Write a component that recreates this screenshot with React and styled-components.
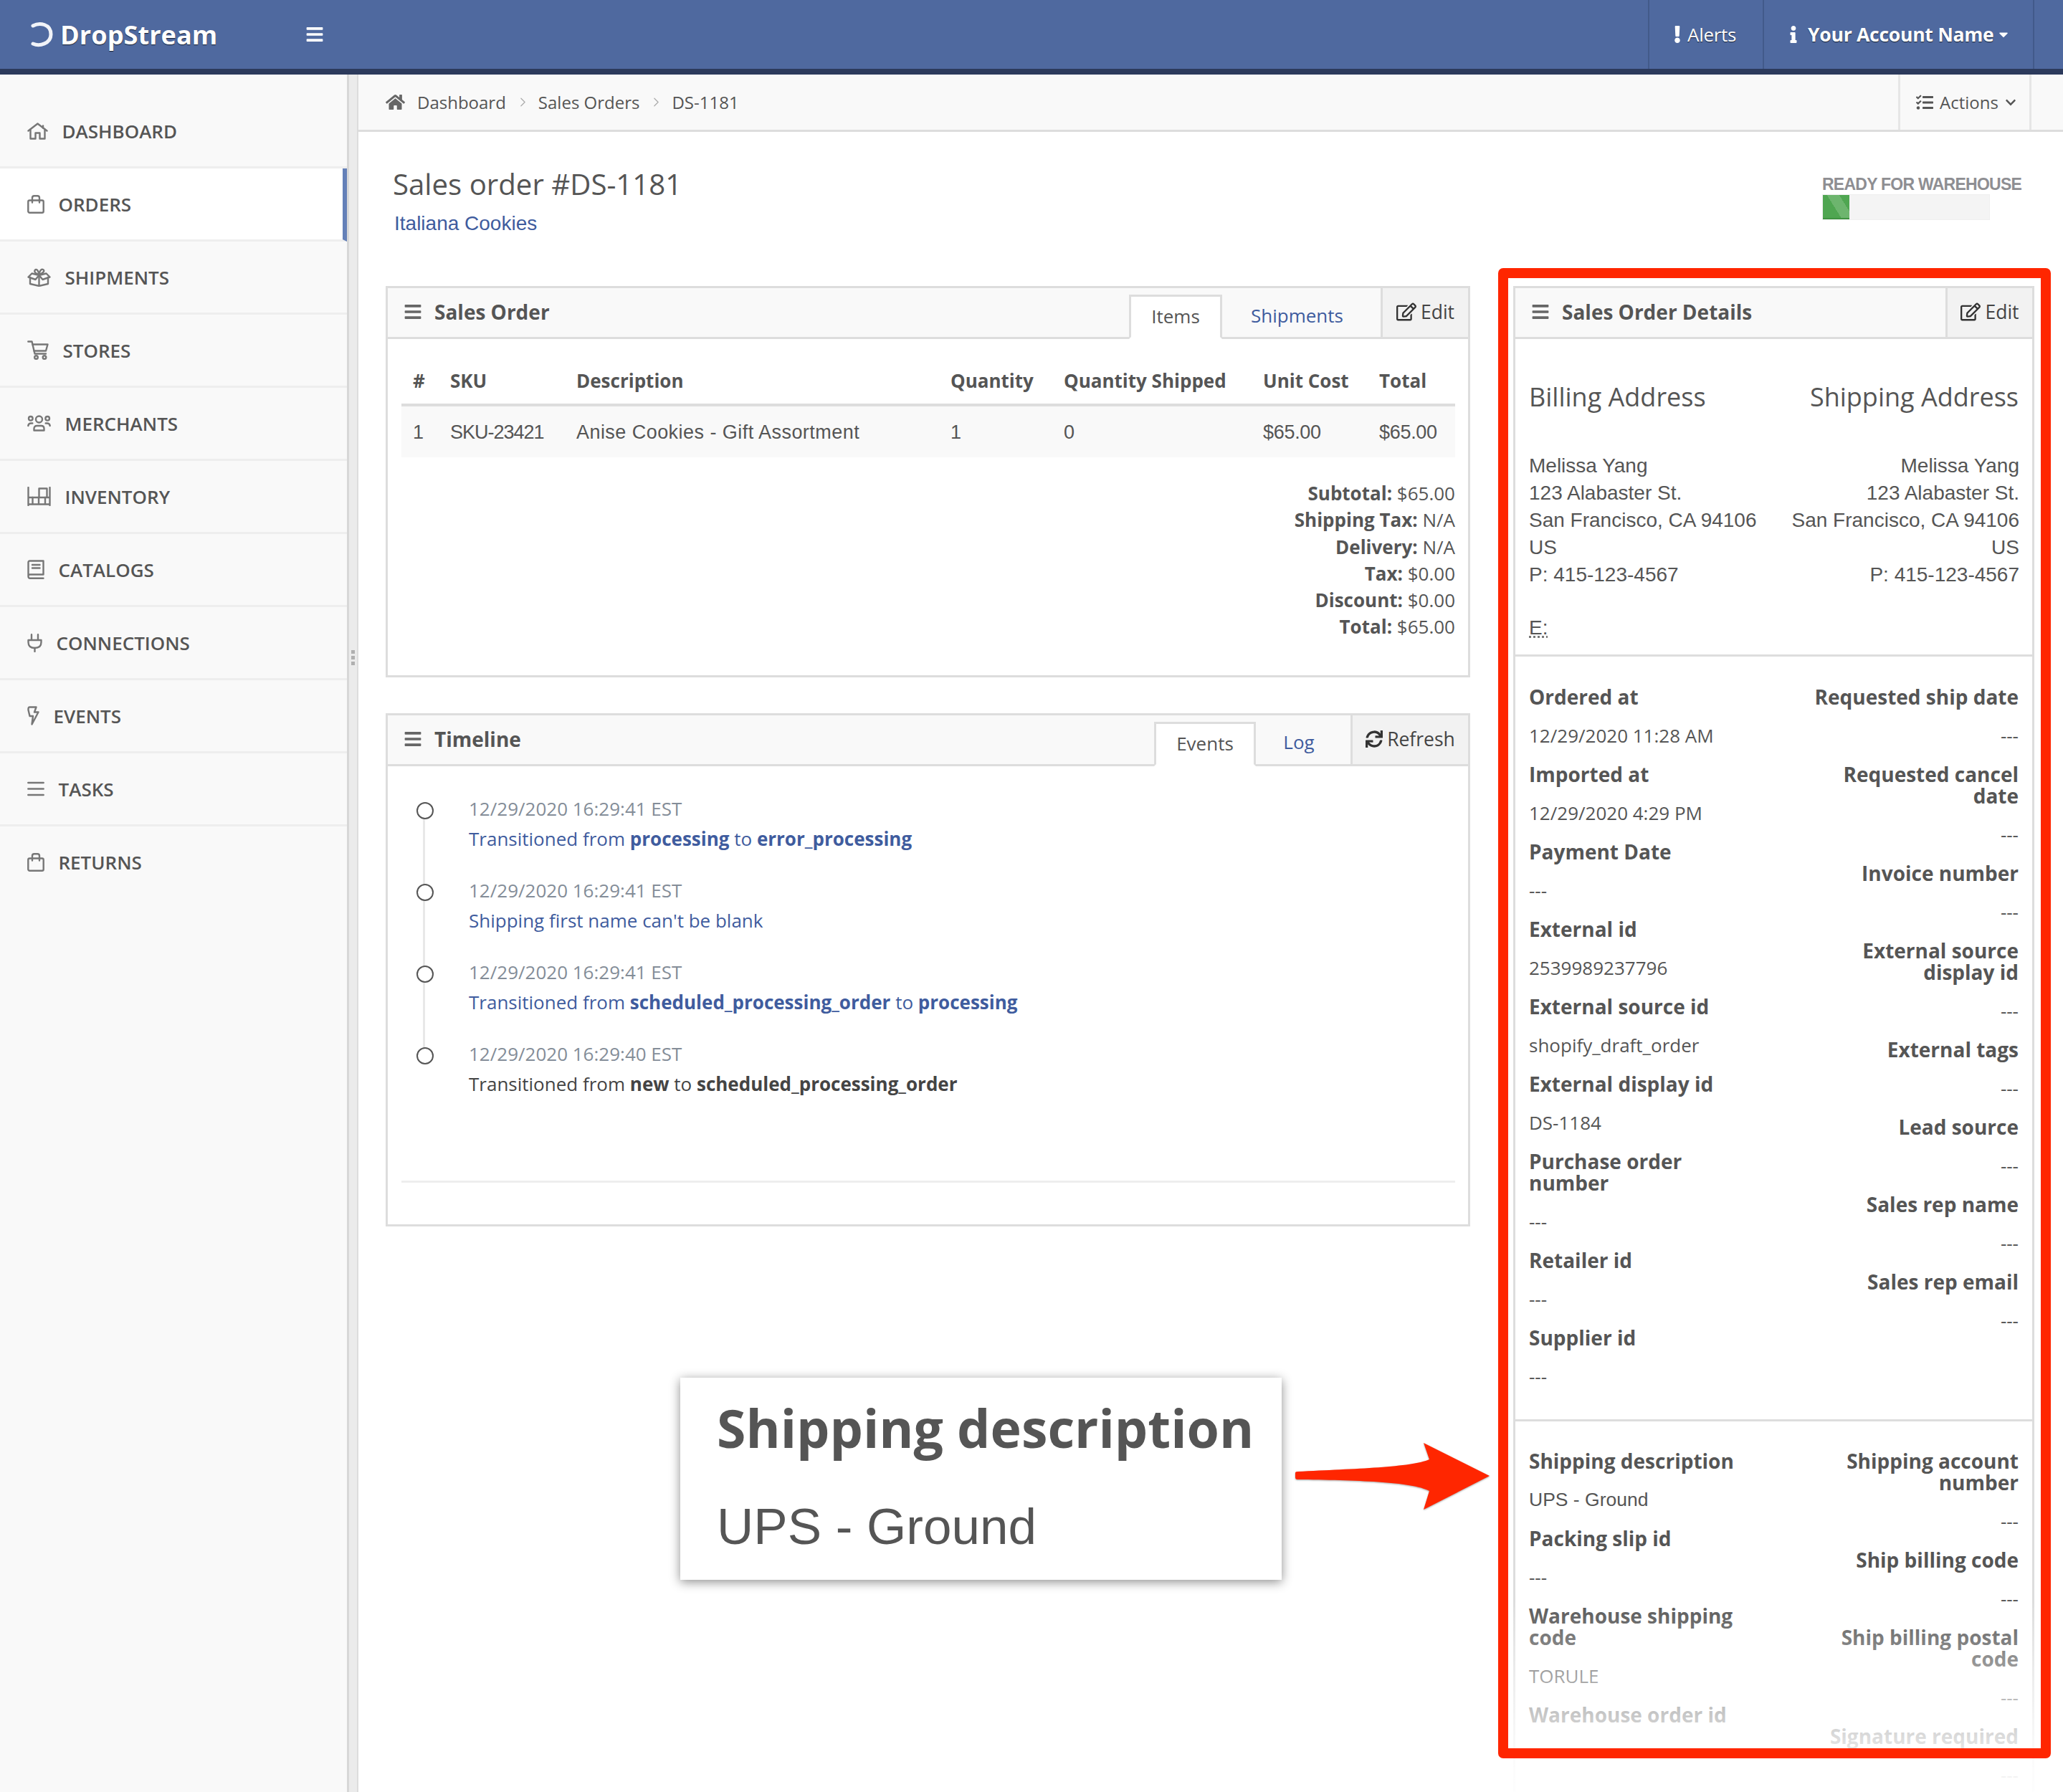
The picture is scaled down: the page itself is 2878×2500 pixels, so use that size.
import React from 'react';
import styled, { createGlobalStyle } from 'styled-components';
import {
  FaHome,
  FaBars,
  FaTasks,
  FaRegEdit,
  FaSync,
  FaChevronDown,
  FaExclamation,
  FaInfo,
  FaCaretDown,
} from 'react-icons/fa';
import { ChevronRight } from 'lucide-react';

const SANS = '"Open Sans", "Liberation Sans", sans-serif';
const ARIAL = '"Liberation Sans", Arial, sans-serif';

const GlobalStyle = createGlobalStyle`
  html, body {
    margin: 0;
    padding: 0;
    background: #fff;
  }
  * {
    box-sizing: border-box;
  }
`;

const Page = styled.div`
  position: relative;
  width: 2878px;
  height: 2500px;
  overflow: hidden;
  font-family: ${SANS};
  color: #555;
`;

const TopBar = styled.header`
  display: flex;
  align-items: stretch;
  height: 104px;
  padding-right: 40px;
  background: #4f699f;
  border-bottom: 8px solid #2c3a5c;
  color: #fff;
  text-shadow: 0 1px 1px rgba(0, 0, 0, 0.7);
`;

const Brand = styled.div`
  display: flex;
  align-items: center;
  gap: 10px;
  width: 426px;
  padding-left: 43px;
  font-size: 36.2px;
  font-weight: 700;
`;

const BrandMark = styled.svg`
  filter: blur(0.6px);
`;

const MenuToggle = styled.div`
  display: flex;
  align-items: center;
  font-size: 26px;
  flex: 1;
`;

const TopItem = styled.div`
  display: flex;
  align-items: center;
  gap: ${({ $gap }) => $gap || 6}px;
  width: ${({ $w }) => $w}px;
  padding-left: ${({ $pad }) => $pad}px;
  border-left: 2px solid #425a8a;
  font-size: ${({ $bold }) => ($bold ? 26.6 : 26)}px;
  font-weight: ${({ $bold }) => ($bold ? 700 : 400)};
  letter-spacing: -0.3px;
  &:last-child {
    border-right: 2px solid #425a8a;
  }
`;

const Body = styled.div`
  display: flex;
  height: 2396px;
`;

const Sidebar = styled.nav`
  width: 484px;
  padding-top: 29px;
  background: #f9f9f9;
`;

const NavItem = styled.div`
  display: flex;
  align-items: center;
  gap: 19.5px;
  height: 102px;
  padding-left: 38px;
  border-bottom: 3px solid #eee;
  border-right: ${({ $active }) => ($active ? '6px solid #6480b8' : 'none')};
  background: ${({ $active }) => ($active ? '#fff' : 'transparent')};
  font-size: 26px;
  font-weight: 600;
  color: #555;
  &:last-child {
    border-bottom-color: transparent;
  }
`;

const NavGlyph = styled.svg`
  flex: none;
  fill: none;
  stroke: #777;
  stroke-width: 2.4;
  stroke-linecap: round;
  stroke-linejoin: round;
`;

const Gutter = styled.div`
  display: flex;
  flex-direction: column;
  align-items: center;
  gap: 3px;
  width: 16px;
  padding-top: 803px;
  background: #ebebeb;
  border-left: 3px solid #d7d7d7;
  border-right: 2px solid #dcdcdc;
`;

const GripDot = styled.span`
  width: 5px;
  height: 5px;
  background: #b0b0b0;
`;

const Main = styled.main`
  flex: 1;
  min-width: 0;
`;

const Crumbs = styled.div`
  display: flex;
  align-items: stretch;
  height: 80px;
  padding: 0 44px 0 38px;
  background: #f9f9f9;
  border-bottom: 3px solid #ddd;
  font-size: 24px;
`;

const CrumbTrail = styled.div`
  display: flex;
  align-items: center;
  flex: 1;
  color: #555;
  svg {
    flex: none;
  }
`;

const CrumbSep = styled(ChevronRight)`
  margin: 0 11px 0 13px;
  width: 21px;
  height: 21px;
  stroke-width: 1.4;
  color: #aaa;
`;

const ActionsMenu = styled.div`
  display: flex;
  align-items: center;
  gap: 9px;
  width: 186px;
  padding-left: 22px;
  border-left: 3px solid #e6e6e6;
  border-right: 3px solid #e6e6e6;
`;

const Content = styled.div`
  padding: 0 40px 0 38px;
`;

const TitleRow = styled.div`
  display: flex;
  justify-content: space-between;
  height: 215px;
  padding: 45px 18px 0 10px;
`;

const Title = styled.h1`
  margin: 0;
  font-size: 40.2px;
  font-weight: 400;
  line-height: 56px;
  color: #555;
`;

const SubLink = styled.a`
  display: block;
  margin: 13px 0 0 2px;
  font-family: ${ARIAL};
  font-size: 28px;
  line-height: 28px;
  color: #3f5c9e;
`;

const Status = styled.div`
  width: 278px;
  padding-top: 16px;
`;

const StatusLabel = styled.div`
  font-family: ${ARIAL};
  font-size: 23px;
  font-weight: 700;
  letter-spacing: -0.74px;
  line-height: 24px;
  color: #8e8e92;
  white-space: nowrap;
`;

const Progress = styled.div`
  width: 234px;
  height: 36px;
  margin-top: 2px;
  background: #f4f4f4;
  border: 1px solid #efefef;
`;

const ProgressFill = styled.div`
  height: 100%;
  background:
    linear-gradient(58deg, transparent 45%, rgba(255, 255, 255, 0.17) 45%, rgba(255, 255, 255, 0.17) 75%, transparent 75%),
    #4fa651;
  border-bottom: 2px solid #3f9341;
`;

const Columns = styled.div`
  display: grid;
  grid-template-columns: 1513px 727px;
  gap: 60px;
  align-items: start;
`;

const LeftColumn = styled.div`
  display: flex;
  flex-direction: column;
  gap: 50px;
`;

const Panel = styled.section`
  position: relative;
  border: 3px solid #ddd;
  background: #fff;
`;

const PanelHead = styled.div`
  display: flex;
  align-items: stretch;
  height: 71px;
  background: #f9f9f9;
  border-bottom: 3px solid #ddd;
`;

const PanelTitle = styled.h2`
  display: flex;
  align-items: center;
  gap: 17px;
  flex: 1;
  margin: 0;
  padding: 0 0 2px 22px;
  font-size: 28px;
  font-weight: 700;
  color: #555;
  svg {
    font-size: 26px;
    color: #666;
  }
`;

const Tab = styled.div`
  display: flex;
  align-items: center;
  justify-content: center;
  width: ${({ $w }) => $w}px;
  height: 62px;
  align-self: flex-end;
  margin-bottom: -3px;
  padding-bottom: 2px;
  padding-right: ${({ $active }) => ($active ? 0 : 12)}px;
  background: ${({ $active }) => ($active ? '#fff' : 'transparent')};
  border: ${({ $active }) => ($active ? '3px solid #ddd' : 'none')};
  border-bottom: ${({ $active }) => ($active ? '3px solid #fff' : '3px solid #ddd')};
  font-size: 26px;
  color: ${({ $active }) => ($active ? '#555' : '#3f5c9e')};
`;

const HeadButton = styled.div`
  display: flex;
  align-items: center;
  justify-content: center;
  gap: 6px;
  width: ${({ $w }) => $w}px;
  padding-bottom: 2px;
  background: #f2f2f2;
  border-left: 3px solid #ddd;
  font-size: 26.5px;
  color: #444;
  svg {
    font-size: 28px;
    color: #333;
  }
`;

const OrderBody = styled.div`
  padding: 26px 18px 48px 19px;
`;

const ItemsTable = styled.table`
  width: 1470px;
  table-layout: fixed;
  border-collapse: collapse;
`;

const HeadCell = styled.th`
  width: ${({ $w }) => $w}px;
  height: 66px;
  padding: 0 0 0 16px;
  text-align: left;
  font-size: 26px;
  font-weight: 700;
  color: #555;
  border-bottom: 4px solid #ddd;
  white-space: nowrap;
`;

const BodyCell = styled.td`
  height: 73px;
  padding: 2px 0 0 16px;
  background: #f9f9f9;
  font-family: ${ARIAL};
  font-size: 27px;
  letter-spacing: ${({ $track }) => $track || 0}px;
  color: #555;
  white-space: nowrap;
`;

const Totals = styled.div`
  margin-top: 32px;
  text-align: right;
  font-size: 26px;
  line-height: 37.3px;
  strong {
    font-weight: 700;
  }
`;

const TimelineBody = styled.div`
  padding: 38.5px 18px 58px 19px;
`;

const EventList = styled.div`
  padding-bottom: 114px;
  border-bottom: 3px solid #eee;
`;

const EventRow = styled.div`
  position: relative;
  padding: 0 0 30px 94px;
  &:last-child {
    padding-bottom: 0;
  }
  &::before {
    content: '';
    position: absolute;
    left: 21px;
    top: 12px;
    width: 20px;
    height: 20px;
    border: 2px solid #555;
    border-radius: 50%;
    background: #fff;
    z-index: 1;
  }
  &:not(:last-child)::after {
    content: '';
    position: absolute;
    left: 30px;
    top: 30px;
    bottom: -12px;
    width: 3px;
    background: #e8e8e8;
  }
`;

const EventTime = styled.div`
  font-size: 26px;
  line-height: 42px;
  color: #848d98;
`;

const EventText = styled.div`
  font-size: 26px;
  line-height: 42px;
  color: ${({ $link }) => ($link ? '#3f5c9e' : '#444')};
  strong {
    font-weight: 700;
  }
`;

const DetailSection = styled.div`
  display: flex;
  justify-content: space-between;
  padding: ${({ $pad }) => $pad};
  border-bottom: ${({ $last }) => ($last ? 'none' : '3px solid #ddd')};
`;

const DetailColumn = styled.div`
  width: 320px;
  text-align: ${({ $right }) => ($right ? 'right' : 'left')};
`;

const AddressHeading = styled.h3`
  margin: 0 0 55px;
  font-size: 36px;
  font-weight: 400;
  line-height: 44px;
  color: #555;
  white-space: nowrap;
`;

const AddressLines = styled.div`
  font-family: ${ARIAL};
  font-size: 28px;
  line-height: 38px;
  white-space: nowrap;
  margin-right: -1px;
`;

const EmailLabel = styled.div`
  margin-top: 36px;
  font-family: ${ARIAL};
  font-size: 28px;
  line-height: 38px;
  abbr {
    text-decoration: underline dotted #777;
  }
`;

const FieldLabel = styled.div`
  width: 310px;
  margin: ${({ $right }) => ($right ? '0 0 24px auto' : '0 0 24px')};
  font-size: 28px;
  font-weight: 700;
  line-height: 30px;
  color: #555;
`;

const FieldValue = styled.div`
  margin-bottom: 24px;
  font-family: ${({ $arial }) => ($arial ? ARIAL : SANS)};
  font-size: ${({ $arial }) => ($arial ? 26.5 : 26)}px;
  line-height: 30px;
  color: #555;
`;

const Fade = styled.div`
  position: absolute;
  left: -3px;
  right: -3px;
  top: 1830px;
  height: 275px;
  background: linear-gradient(
    to bottom,
    rgba(255, 255, 255, 0) 0%,
    rgba(255, 255, 255, 0.5) 42%,
    rgba(255, 255, 255, 0.88) 78%,
    rgba(255, 255, 255, 0.97) 100%
  );
`;

const RedFrame = styled.div`
  position: absolute;
  left: 2090px;
  top: 374px;
  width: 771px;
  height: 2079px;
  border: 14px solid #ff2600;
  border-radius: 7px;
`;

const Callout = styled.div`
  position: absolute;
  left: 949px;
  top: 1922px;
  width: 839px;
  height: 282px;
  padding: 20px 0 0 51px;
  background: #fff;
  box-shadow: 0 3px 14px rgba(0, 0, 0, 0.45);
  color: #555;
`;

const CalloutLabel = styled.div`
  font-size: 73.4px;
  font-weight: 700;
  line-height: 100px;
  white-space: nowrap;
`;

const CalloutValue = styled.div`
  margin-top: 43px;
  font-family: ${ARIAL};
  font-size: 71px;
  line-height: 90px;
  white-space: nowrap;
`;

const ArrowMark = styled.svg`
  position: absolute;
  left: 1800px;
  top: 2005px;
  filter: drop-shadow(0 1px 1px rgba(0, 0, 0, 0.35));
`;

const navItems = [
  {
    label: 'DASHBOARD',
    w: 29,
    h: 24,
    draw: (
      <>
        <path d="M1.500 11.500 14.500 1.500l13 10" />
        <path d="M4.500 9.500V22.500H11.500V14.500H17.500V22.500H24.500V9.500" />
        <path d="M22 4.500V7.500" />
      </>
    ),
  },
  {
    label: 'ORDERS',
    active: true,
    w: 24,
    h: 26,
    draw: (
      <>
        <rect x="1.300" y="7.500" width="21.400" height="17.200" rx="2" />
        <path d="M7 10.500V4q0-2.700 2.700-2.700h4.600Q17 1.300 17 4v6.500" />
      </>
    ),
  },
  {
    label: 'SHIPMENTS',
    w: 33,
    h: 26,
    draw: (
      <>
        <path d="M4 13V22l12.500 3 12.500-3V13" />
        <path d="M16.500 11V25" />
        <path d="M16.500 10 6.500 7.500 1.500 12.500l10 3.500zM16.500 10l10-2.500 5 5-10 3.500z" />
        <path d="M16.500 9C13 8 9.500 6.500 10.500 3.500s4.500-2 6 5.500zM16.500 9c.5-5 3-8 5.500-7s1.500 5-5.500 7z" />
      </>
    ),
  },
  {
    label: 'STORES',
    w: 30,
    h: 27,
    draw: (
      <>
        <path d="M1.300 1.500H6.500L10.500 18.500H26" />
        <path d="M7.500 5.500H28.500L26 14.500H9.500" />
        <circle cx="12.500" cy="23.500" r="2.300" />
        <circle cx="24" cy="23.500" r="2.300" />
      </>
    ),
  },
  {
    label: 'MERCHANTS',
    w: 33,
    h: 23,
    draw: (
      <>
        <circle cx="16.500" cy="6" r="4.500" />
        <path d="M9.500 21.500V19q0-4 4-4h6q4 0 4 4v2.500z" />
        <circle cx="4.800" cy="4.800" r="2.800" />
        <circle cx="28.200" cy="4.800" r="2.800" />
        <path d="M1.300 15q.5-3.500 4-3.500h2M31.700 15q-.5-3.500-4-3.500h-2" />
      </>
    ),
  },
  {
    label: 'INVENTORY',
    w: 33,
    h: 27,
    draw: (
      <>
        <path d="M1.500 1V26M31.500 1V26M1.500 24.500H31.500M1.500 15H31.500" />
        <path d="M7.500 24V15M16 24V15M25 24V15" />
        <path d="M16.500 14V2.500H27.500V14" />
      </>
    ),
  },
  {
    label: 'CATALOGS',
    w: 24,
    h: 27,
    draw: (
      <>
        <path d="M1.500 22.500V3.500Q1.500 1.500 3.500 1.500H22.500V20.500H3.500Q1.500 20.500 1.500 23t2 2.800H22.500" />
        <path d="M7 7H17.500M7 11.500H17.500" />
      </>
    ),
  },
  {
    label: 'CONNECTIONS',
    w: 21,
    h: 26,
    draw: (
      <>
        <path d="M6 1.300V8M15 1.300V8" />
        <path d="M1.500 9H19.500V12q0 8-9 8t-9-8z" />
        <path d="M10.500 20V25" />
      </>
    ),
  },
  {
    label: 'EVENTS',
    w: 17,
    h: 27,
    draw: <path d="M3 1.500H12.500L10 8.500H15.500L6.500 25.500 8 14H3.500L1.500 5.500Q1.300 1.500 3 1.500z" />,
  },
  {
    label: 'TASKS',
    w: 24,
    h: 21,
    draw: <path d="M1.300 2H22.700M1.300 10.500H22.700M1.300 19H22.700" />,
  },
  {
    label: 'RETURNS',
    w: 24,
    h: 26,
    draw: (
      <>
        <rect x="1.300" y="7.500" width="21.400" height="17.200" rx="2" />
        <path d="M7 10.500V4q0-2.700 2.700-2.700h4.600Q17 1.300 17 4v6.500" />
      </>
    ),
  },
];

const orderFieldsLeft = [
  ['Ordered at', '12/29/2020 11:28 AM'],
  ['Imported at', '12/29/2020 4:29 PM'],
  ['Payment Date', '---'],
  ['External id', '2539989237796'],
  ['External source id', 'shopify_draft_order'],
  ['External display id', 'DS-1184'],
  ['Purchase order number', '---'],
  ['Retailer id', '---'],
  ['Supplier id', '---'],
];

const orderFieldsRight = [
  ['Requested ship date', '---'],
  ['Requested cancel date', '---'],
  ['Invoice number', '---'],
  ['External source display id', '---'],
  ['External tags', '---'],
  ['Lead source', '---'],
  ['Sales rep name', '---'],
  ['Sales rep email', '---'],
];

const shippingFieldsLeft = [
  ['Shipping description', 'UPS - Ground', true],
  ['Packing slip id', '---'],
  ['Warehouse shipping code', 'TORULE'],
  ['Warehouse order id', '---'],
];

const shippingFieldsRight = [
  ['Shipping account number', '---'],
  ['Ship billing code', '---'],
  ['Ship billing postal code', '---'],
  ['Signature required', '---'],
];

const columns = [
  ['#', 52],
  ['SKU', 176],
  ['Description', 522],
  ['Quantity', 158],
  ['Quantity Shipped', 278],
  ['Unit Cost', 162],
  ['Total', 122],
];

const events = [
  {
    time: '12/29/2020 16:29:41 EST',
    link: true,
    text: (
      <>
        Transitioned from <strong>processing</strong> to <strong>error_processing</strong>
      </>
    ),
  },
  { time: '12/29/2020 16:29:41 EST', link: true, text: "Shipping first name can't be blank" },
  {
    time: '12/29/2020 16:29:41 EST',
    link: true,
    text: (
      <>
        Transitioned from <strong>scheduled_processing_order</strong> to <strong>processing</strong>
      </>
    ),
  },
  {
    time: '12/29/2020 16:29:40 EST',
    text: (
      <>
        Transitioned from <strong>new</strong> to <strong>scheduled_processing_order</strong>
      </>
    ),
  },
];

const totals = [
  ['Subtotal:', '$65.00'],
  ['Shipping Tax:', 'N/A'],
  ['Delivery:', 'N/A'],
  ['Tax:', '$0.00'],
  ['Discount:', '$0.00'],
  ['Total:', '$65.00'],
];

const address = ['Melissa Yang', '123 Alabaster St.', 'San Francisco, CA 94106', 'US', 'P: 415-123-4567'];

const Fields = ({ items, right }) =>
  items.map(([label, value, arial]) => (
    <React.Fragment key={label}>
      <FieldLabel $right={right}>{label}</FieldLabel>
      <FieldValue $arial={arial}>{value}</FieldValue>
    </React.Fragment>
  ));

const App = () => (
  <Page>
    <GlobalStyle />
    <TopBar>
      <Brand>
        <BrandMark width="31" height="37" viewBox="0 0 31 37" fill="none">
          <path
            d="M3 6C12 1 28 3 28 18 28 31 12 35 3 31"
            stroke="#fff"
            strokeWidth="5"
            strokeLinecap="round"
            opacity="0.92"
          />
        </BrandMark>
        DropStream
      </Brand>
      <MenuToggle>
        <FaBars />
      </MenuToggle>
      <TopItem $w={160} $pad={27} $gap={2}>
        <FaExclamation style={{ fontSize: 24 }} />
        Alerts
      </TopItem>
      <TopItem $w={379} $pad={29} $bold $gap={8}>
        <FaInfo style={{ fontSize: 24 }} />
        Your Account Name
        <FaCaretDown style={{ fontSize: 20, marginLeft: -5 }} />
      </TopItem>
    </TopBar>

    <Body>
      <Sidebar>
        {navItems.map(({ label, active, w, h, draw }) => (
          <NavItem key={label} $active={active}>
            <NavGlyph width={w} height={h} viewBox={`0 0 ${w} ${h}`}>
              {draw}
            </NavGlyph>
            {label}
          </NavItem>
        ))}
      </Sidebar>
      <Gutter>
        <GripDot />
        <GripDot />
        <GripDot />
      </Gutter>

      <Main>
        <Crumbs>
          <CrumbTrail>
            <FaHome style={{ fontSize: 27, marginRight: 17, color: '#666' }} />
            Dashboard
            <CrumbSep />
            Sales Orders
            <CrumbSep />
            DS-1181
          </CrumbTrail>
          <ActionsMenu>
            <FaTasks style={{ fontSize: 24 }} />
            Actions
            <FaChevronDown style={{ fontSize: 16 }} />
          </ActionsMenu>
        </Crumbs>

        <Content>
          <TitleRow>
            <div>
              <Title>Sales order #DS-1181</Title>
              <SubLink>Italiana Cookies</SubLink>
            </div>
            <Status>
              <StatusLabel>READY FOR WAREHOUSE</StatusLabel>
              <Progress>
                <ProgressFill style={{ width: '16%' }} />
              </Progress>
            </Status>
          </TitleRow>

          <Columns>
            <LeftColumn>
              <Panel>
                <PanelHead>
                  <PanelTitle>
                    <FaBars />
                    Sales Order
                  </PanelTitle>
                  <Tab $active $w={130}>
                    Items
                  </Tab>
                  <Tab $w={221}>Shipments</Tab>
                  <HeadButton $w={122}>
                    <FaRegEdit />
                    Edit
                  </HeadButton>
                </PanelHead>
                <OrderBody>
                  <ItemsTable>
                    <thead>
                      <tr>
                        {columns.map(([name, w]) => (
                          <HeadCell key={name} $w={w}>
                            {name}
                          </HeadCell>
                        ))}
                      </tr>
                    </thead>
                    <tbody>
                      <tr>
                        <BodyCell>1</BodyCell>
                        <BodyCell $track={-1}>SKU-23421</BodyCell>
                        <BodyCell $track={0.45}>Anise Cookies - Gift Assortment</BodyCell>
                        <BodyCell>1</BodyCell>
                        <BodyCell>0</BodyCell>
                        <BodyCell $track={-0.3}>$65.00</BodyCell>
                        <BodyCell $track={-0.3}>$65.00</BodyCell>
                      </tr>
                    </tbody>
                  </ItemsTable>
                  <Totals>
                    {totals.map(([label, value]) => (
                      <div key={label}>
                        <strong>{label}</strong> {value}
                      </div>
                    ))}
                  </Totals>
                </OrderBody>
              </Panel>

              <Panel>
                <PanelHead>
                  <PanelTitle>
                    <FaBars />
                    Timeline
                  </PanelTitle>
                  <Tab $active $w={142}>
                    Events
                  </Tab>
                  <Tab $w={132}>Log</Tab>
                  <HeadButton $w={164}>
                    <FaSync style={{ fontSize: 24 }} />
                    Refresh
                  </HeadButton>
                </PanelHead>
                <TimelineBody>
                  <EventList>
                    {events.map(({ time, link, text }, index) => (
                      <EventRow key={index}>
                        <EventTime>{time}</EventTime>
                        <EventText $link={link}>{text}</EventText>
                      </EventRow>
                    ))}
                  </EventList>
                </TimelineBody>
              </Panel>
            </LeftColumn>

            <Panel>
              <PanelHead>
                <PanelTitle>
                  <FaBars />
                  Sales Order Details
                </PanelTitle>
                <HeadButton $w={121}>
                  <FaRegEdit />
                  Edit
                </HeadButton>
              </PanelHead>

              <DetailSection $pad="59px 19px 18px 19px">
                <DetailColumn>
                  <AddressHeading>Billing Address</AddressHeading>
                  <AddressLines>
                    {address.map((line) => (
                      <div key={line}>{line}</div>
                    ))}
                  </AddressLines>
                  <EmailLabel>
                    <abbr>E:</abbr>
                  </EmailLabel>
                </DetailColumn>
                <DetailColumn $right>
                  <AddressHeading>Shipping Address</AddressHeading>
                  <AddressLines>
                    {address.map((line) => (
                      <div key={line}>{line}</div>
                    ))}
                  </AddressLines>
                </DetailColumn>
              </DetailSection>

              <DetailSection $pad="41px 19px 21px 19px">
                <DetailColumn>
                  <Fields items={orderFieldsLeft} />
                </DetailColumn>
                <DetailColumn $right>
                  <Fields items={orderFieldsRight} right />
                </DetailColumn>
              </DetailSection>

              <DetailSection $pad="40px 19px 60px 19px" $last>
                <DetailColumn>
                  <Fields items={shippingFieldsLeft} />
                </DetailColumn>
                <DetailColumn $right>
                  <Fields items={shippingFieldsRight} right />
                </DetailColumn>
              </DetailSection>
              <Fade />
            </Panel>
          </Columns>
        </Content>
      </Main>
    </Body>

    <RedFrame />
    <Callout>
      <CalloutLabel>Shipping description</CalloutLabel>
      <CalloutValue>UPS - Ground</CalloutValue>
    </Callout>
    <ArrowMark width="285" height="110" viewBox="0 0 285 110">
      <path
        d="M7 50 Q7 48 10 48C90 44 170 42 194 31L186 8 278 54 186 101 194 75C170 62 90 60 10 59 Q7 59 7 56Z"
        fill="#ff2600"
      />
    </ArrowMark>
  </Page>
);

export default App;
